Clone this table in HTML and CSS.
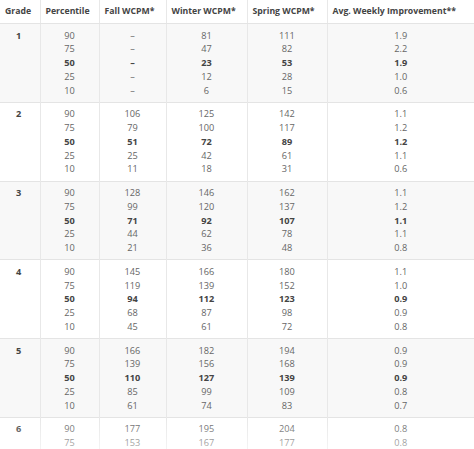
FILE: index.html
```html
<!DOCTYPE html>
<html>
<head>
<meta charset="utf-8">
<link rel="stylesheet" href="styles.css">
</head>
<body>
<div class="wrap">
<table class="norms">
<colgroup>
<col class="c-grade"><col class="c-pct"><col class="c-fall"><col class="c-win"><col class="c-spr"><col class="c-avg">
</colgroup>
<thead>
<tr><th>Grade</th><th>Percentile</th><th>Fall WCPM*</th><th>Winter WCPM*</th><th>Spring WCPM*</th><th>Avg. Weekly Improvement**</th></tr>
</thead>
<tbody class="odd">
<tr class="first"><td class="grade" rowspan="5">1</td><td>90</td><td>–</td><td>81</td><td>111</td><td>1.9</td></tr>
<tr><td>75</td><td>–</td><td>47</td><td>82</td><td>2.2</td></tr>
<tr class="b"><td>50</td><td>–</td><td>23</td><td>53</td><td>1.9</td></tr>
<tr><td>25</td><td>–</td><td>12</td><td>28</td><td>1.0</td></tr>
<tr class="last"><td>10</td><td>–</td><td>6</td><td>15</td><td>0.6</td></tr>
</tbody>
<tbody>
<tr class="first"><td class="grade" rowspan="5">2</td><td>90</td><td>106</td><td>125</td><td>142</td><td>1.1</td></tr>
<tr><td>75</td><td>79</td><td>100</td><td>117</td><td>1.2</td></tr>
<tr class="b"><td>50</td><td>51</td><td>72</td><td>89</td><td>1.2</td></tr>
<tr><td>25</td><td>25</td><td>42</td><td>61</td><td>1.1</td></tr>
<tr class="last"><td>10</td><td>11</td><td>18</td><td>31</td><td>0.6</td></tr>
</tbody>
<tbody class="odd">
<tr class="first"><td class="grade" rowspan="5">3</td><td>90</td><td>128</td><td>146</td><td>162</td><td>1.1</td></tr>
<tr><td>75</td><td>99</td><td>120</td><td>137</td><td>1.2</td></tr>
<tr class="b"><td>50</td><td>71</td><td>92</td><td>107</td><td>1.1</td></tr>
<tr><td>25</td><td>44</td><td>62</td><td>78</td><td>1.1</td></tr>
<tr class="last"><td>10</td><td>21</td><td>36</td><td>48</td><td>0.8</td></tr>
</tbody>
<tbody>
<tr class="first"><td class="grade" rowspan="5">4</td><td>90</td><td>145</td><td>166</td><td>180</td><td>1.1</td></tr>
<tr><td>75</td><td>119</td><td>139</td><td>152</td><td>1.0</td></tr>
<tr class="b"><td>50</td><td>94</td><td>112</td><td>123</td><td>0.9</td></tr>
<tr><td>25</td><td>68</td><td>87</td><td>98</td><td>0.9</td></tr>
<tr class="last"><td>10</td><td>45</td><td>61</td><td>72</td><td>0.8</td></tr>
</tbody>
<tbody class="odd">
<tr class="first"><td class="grade" rowspan="5">5</td><td>90</td><td>166</td><td>182</td><td>194</td><td>0.9</td></tr>
<tr><td>75</td><td>139</td><td>156</td><td>168</td><td>0.9</td></tr>
<tr class="b"><td>50</td><td>110</td><td>127</td><td>139</td><td>0.9</td></tr>
<tr><td>25</td><td>85</td><td>99</td><td>109</td><td>0.8</td></tr>
<tr class="last"><td>10</td><td>61</td><td>74</td><td>83</td><td>0.7</td></tr>
</tbody>
<tbody class="end">
<tr class="first"><td class="grade" rowspan="2">6</td><td>90</td><td>177</td><td>195</td><td>204</td><td>0.8</td></tr>
<tr><td>75</td><td>153</td><td>167</td><td>177</td><td>0.8</td></tr>
</tbody>
</table>
<div class="fade"></div>
</div>
</body>
</html>
```

FILE: styles.css
```css
html, body {
  margin: 0;
  padding: 0;
  background: #fff;
}
body {
  font-family: "Open Sans", "Liberation Sans", sans-serif;
  font-size: 9.2px;
  color: #666;
  overflow: hidden;
  height: 449px;
}
.wrap {
  position: relative;
  width: 474px;
  height: 449px;
  overflow: hidden;
}
.norms {
  border-collapse: collapse;
  table-layout: fixed;
  width: 474px;
}
.c-grade { width: 40px; }
.c-pct { width: 59px; }
.c-fall { width: 67px; }
.c-win { width: 81px; }
.c-spr { width: 80px; }
.c-avg { width: 147px; }
.norms th {
  font-size: 8.7px;
  font-weight: 700;
  color: #444;
  text-align: left;
  padding: 0 0 0 5px;
  height: 23px;
  line-height: 23px;
  border-bottom: 1px solid #e4e4e4;
  border-left: 1px solid #e8e8e8;
  white-space: nowrap;
}
.norms th:first-child { border-left: none; }
.norms td {
  text-align: center;
  padding: 0;
  height: 13.75px;
  line-height: 13.75px;
  border-left: 1px solid #e8e8e8;
}
.norms td.grade {
  border-left: none;
  vertical-align: top;
  font-weight: 700;
  color: #444;
  text-align: left;
  padding-left: 16px;
  padding-top: 4.5px;
}
.norms tr.first td { padding-top: 4.5px; }
.norms tr.last td { padding-bottom: 4.5px; }
.norms tbody { border-bottom: 1px solid #e4e4e4; }
.norms tbody.end { border-bottom: none; }
.norms tbody.odd { background: #f8f8f8; }
.norms tr.b td { font-weight: 700; color: #444; }
.fade {
  position: absolute;
  left: 0;
  right: 0;
  bottom: 0;
  height: 30px;
  background: linear-gradient(to bottom, rgba(255,255,255,0), rgba(255,255,255,0.5));
}
```
